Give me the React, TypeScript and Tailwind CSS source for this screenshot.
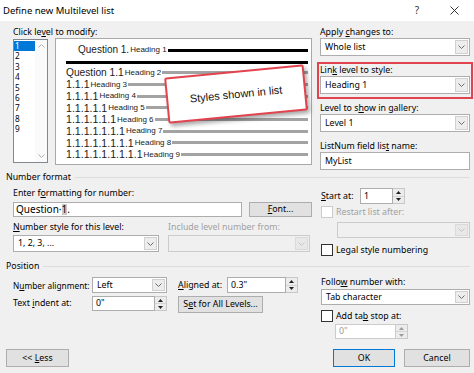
import React from "react"

const ChevronDown = ({ color = "#6d6d6d" }: { color?: string }) => (
  <svg width="7" height="4" viewBox="0 0 7 4">
    <polyline points="0.5,0.5 3.5,3.5 6.5,0.5" fill="none" stroke={color} strokeWidth="1" />
  </svg>
)

const ChevronUp = ({ color = "#b0b0b0" }: { color?: string }) => (
  <svg width="7" height="4" viewBox="0 0 7 4">
    <polyline points="0.5,3.5 3.5,0.5 6.5,3.5" fill="none" stroke={color} strokeWidth="1" />
  </svg>
)

type SelectProps = {
  value?: string
  className?: string
  disabled?: boolean
}

const Select = ({ value = "", className = "", disabled = false }: SelectProps) => (
  <div
    className={`flex items-stretch border ${
      disabled ? "border-[#cccccc] bg-[#f0f0f0]" : "border-[#adadad] bg-white"
    } ${className}`}
  >
    <span className="flex flex-1 items-center pl-[4px]">{value}</span>
    <span
      className={`my-[1px] mr-[1px] flex w-[13px] items-center justify-center border ${
        disabled ? "border-[#dadada] bg-[#e8e8e8]" : "border-[#d0d0d0] bg-[#ededed]"
      }`}
    >
      <ChevronDown color={disabled ? "#c4c4c4" : "#6d6d6d"} />
    </span>
  </div>
)

const Spin = ({ value = "", className = "", disabled = false }: SelectProps) => {
  const fill = disabled ? "#9a9a9a" : "#222"
  return (
    <div className={`flex items-stretch ${className}`}>
      <div
        className={`flex flex-1 items-center border bg-white pl-[3px] ${
          disabled ? "border-[#cccccc] text-[#9a9a9a]" : "border-[#adadad]"
        }`}
      >
        {value}
      </div>
      <div className="flex w-[12px] flex-col border border-l-0 border-[#c8c8c8] bg-[#ececec]">
        <span className="flex flex-1 items-center justify-center border-b border-[#d4d4d4]">
          <svg width="5" height="3" viewBox="0 0 5 3">
            <polygon points="0,3 2.5,0 5,3" fill={fill} />
          </svg>
        </span>
        <span className="flex flex-1 items-center justify-center">
          <svg width="5" height="3" viewBox="0 0 5 3">
            <polygon points="0,0 2.5,3 5,0" fill={fill} />
          </svg>
        </span>
      </div>
    </div>
  )
}

const Button = ({
  children,
  className = "",
  primary = false,
}: {
  children: React.ReactNode
  className?: string
  primary?: boolean
}) => (
  <button
    className={`flex items-center justify-center border bg-[#e1e1e1] ${
      primary ? "border-[#0078d7]" : "border-[#adadad]"
    } ${className}`}
  >
    <span>{children}</span>
  </button>
)

const Checkbox = ({ disabled = false }: { disabled?: boolean }) => (
  <span
    className={`block h-[12px] w-[12px] border bg-white ${
      disabled ? "border-[#cccccc]" : "border-[#333333]"
    }`}
  />
)

const GroupHeader = ({ title, className = "" }: { title: string; className?: string }) => (
  <div className={`flex h-[11px] items-center pl-[6px] pr-[4px] ${className}`}>
    <span>{title}</span>
    <span className="ml-[4px] h-px flex-1 bg-[#dcdcdc]" />
  </div>
)

const levels = [
  { num: "Question 1.1", label: "Heading 2" },
  { num: "1.1.1", label: "Heading 3" },
  { num: "1.1.1.1", label: "Heading 4" },
  { num: "1.1.1.1.1", label: "Heading 5" },
  { num: "1.1.1.1.1.1", label: "Heading 6" },
  { num: "1.1.1.1.1.1.1", label: "Heading 7" },
  { num: "1.1.1.1.1.1.1.1", label: "Heading 8" },
  { num: "1.1.1.1.1.1.1.1.1", label: "Heading 9" },
]

const LevelList = () => (
  <div className="flex h-[124px] w-[35px] border border-[#828790] bg-white">
    <div className="flex flex-1 flex-col pt-[1px] text-[8.2px]">
      {[1, 2, 3, 4, 5, 6, 7, 8, 9].map((n) => (
        <div
          key={n}
          className={`h-[10.4px] pl-[1px] leading-[10.4px] ${
            n === 1 ? "bg-[#0078d7] text-white" : ""
          }`}
        >
          {n}
        </div>
      ))}
    </div>
    <div className="flex w-[12px] flex-col items-center justify-between bg-[#fafafa] py-[4px]">
      <ChevronUp />
      <ChevronDown color="#b0b0b0" />
    </div>
  </div>
)

const Preview = () => (
  <div className="relative -mt-[1px] ml-[7px] h-[127px] w-[257px] border border-[#a9a9a9] bg-white font-['Liberation_Sans',Arial,sans-serif] text-[#1a1a1a]">
    <div className="mt-[5px] flex h-[12px] items-center pl-[22px] pr-[3px]">
      <span className="text-[10px] leading-none">Question 1.</span>
      <span className="ml-[1px] text-[8px] leading-none">Heading 1</span>
      <span className="ml-[1px] h-[3px] flex-1 bg-black" />
    </div>
    <div className="ml-[10px] mr-[3px] mt-[5px] h-[3px] bg-black" />
    <div className="mt-[3px] flex flex-col pl-[10px] pr-[3px]">
      {levels.map((l, i) => (
        <div key={l.label} className="flex h-[11.7px] items-center">
          <span className={`${i === 0 ? "text-[10.2px]" : "text-[10.6px]"} leading-none`}>
            {l.num}
          </span>
          <span className="ml-[1px] text-[8px] leading-none">{l.label}</span>
          <span className="ml-[1px] h-[3px] flex-1 bg-[#a3a3a3]" />
        </div>
      ))}
    </div>
    <div className="absolute left-[110px] top-[32px] flex h-[46px] w-[140px] rotate-[-5.5deg] items-center justify-center rounded-[2px] border-2 border-[#e2444f] bg-white text-[11px] text-[#111] shadow-[2px_3px_4px_rgba(0,0,0,0.35)]">
      Styles shown in list
    </div>
  </div>
)

export default function App() {
  return (
    <div className="h-[373px] w-[474px] overflow-hidden whitespace-nowrap bg-[#f0f0f0] font-['Noto_Sans',sans-serif] text-[8.8px] leading-[11px] text-black">
      {/* title bar */}
      <div className="flex h-[21px] items-center bg-white pl-[3px] pr-[15px]">
        <span className="flex-1 text-[9.5px]">Define new Multilevel list</span>
        <span className="mr-[31px] text-[10px] text-[#333]">?</span>
        <svg width="9" height="9" viewBox="0 0 9 9">
          <path d="M0.5 0.5 L8.5 8.5 M8.5 0.5 L0.5 8.5" stroke="#333" strokeWidth="1" />
        </svg>
      </div>

      {/* top: levels + preview + right options */}
      <div className="flex h-[151px] pl-[13px] pt-[6px]">
        <div className="flex w-[300px] flex-col">
          <div className="h-[11px]">
            Click le<u>v</u>el to modify:
          </div>
          <div className="mt-[1px] flex items-start">
            <LevelList />
            <Preview />
          </div>
        </div>
        <div className="ml-[7px] flex w-[150px] flex-col">
          <div className="h-[11px]">
            Apply <u>c</u>hanges to:
          </div>
          <Select value="Whole list" className="h-[18px]" />
          <div className="-mx-[3px] mt-[6px] border-2 border-[#e2444f] px-[1px] pb-[3px] pt-[1px]">
            <div className="h-[11px]">
              Lin<u>k</u> level to style:
            </div>
            <Select value="Heading 1" className="h-[18px]" />
          </div>
          <div className="mt-[4px] h-[11px]">
            Level to s<u>h</u>ow in gallery:
          </div>
          <Select value="Level 1" className="h-[18px]" />
          <div className="mt-[9px] h-[11px]">
            ListNum field lis<u>t</u> name:
          </div>
          <div className="flex h-[18px] items-center border border-[#adadad] bg-white pl-[4px]">
            MyList
          </div>
        </div>
      </div>

      {/* number format */}
      <GroupHeader title="Number format" />
      <div className="flex pl-[13px] pt-[5px]">
        <div className="flex w-[300px] flex-col">
          <div className="h-[11px]">
            Enter f<u>o</u>rmatting for number:
          </div>
          <div className="mt-[3px] flex">
            <div className="flex h-[15px] w-[229px] items-center border border-[#adadad] bg-white pl-[2px] text-[10px]">
              Question·<span className="bg-[#c8c8c8]">1</span>.
            </div>
            <Button className="ml-[7px] h-[15px] w-[63px]">
              <u>F</u>ont...
            </Button>
          </div>
          <div className="mt-[5px] flex h-[11px]">
            <span className="w-[155px]">
              <u>N</u>umber style for this level:
            </span>
            <span className="text-[#a0a0a0]">Include level number from:</span>
          </div>
          <div className="mt-[2px] flex">
            <Select value="1, 2, 3, ..." className="h-[17px] w-[146px]" />
            <Select disabled className="ml-[9px] h-[17px] w-[142px]" />
          </div>
        </div>
        <div className="ml-[8px] flex w-[149px] flex-col">
          <div className="flex h-[16px] items-center">
            <span className="w-[39px]">
              <u>S</u>tart at:
            </span>
            <Spin value="1" className="h-[16px] w-[45px]" />
          </div>
          <div className="mt-[2px] flex h-[12px] items-center">
            <Checkbox disabled />
            <span className="ml-[3px] text-[#a0a0a0]">Restart list after:</span>
          </div>
          <Select disabled className="ml-[16px] mt-[4px] h-[16px] w-[133px]" />
          <div className="mt-[6px] flex h-[12px] items-center">
            <Checkbox />
            <span className="ml-[3px]">Legal style numbering</span>
          </div>
        </div>
      </div>

      {/* position */}
      <GroupHeader title="Position" className="mt-[5px]" />
      <div className="flex pl-[13px] pt-[5px]">
        <div className="flex w-[300px] flex-col">
          <div className="flex h-[16px] items-center">
            <span className="w-[79px] shrink-0 text-[8.3px]">
              N<u>u</u>mber alignment:
            </span>
            <Select value="Left" className="h-[16px] w-[75px] shrink-0" />
            <span className="ml-[11px] w-[49px] shrink-0">
              <u>A</u>ligned at:
            </span>
            <Spin value={'0.3"'} className="h-[16px] w-[71px] shrink-0" />
          </div>
          <div className="mt-[3px] flex h-[17px] items-start">
            <span className="w-[79px] shrink-0 leading-[15px]">
              Text <u>i</u>ndent at:
            </span>
            <Spin value={'0"'} className="h-[15px] w-[75px] shrink-0" />
            <Button className="ml-[11px] h-[17px] w-[85px] shrink-0">
              S<u>e</u>t for All Levels...
            </Button>
          </div>
        </div>
        <div className="ml-[8px] flex w-[149px] flex-col">
          <div className="h-[11px]">
            Follo<u>w</u> number with:
          </div>
          <Select value="Tab character" className="mt-[1px] h-[16px]" />
          <div className="mt-[5px] flex h-[12px] items-center">
            <Checkbox />
            <span className="ml-[3px]">
              Add ta<u>b</u> stop at:
            </span>
          </div>
          <Spin value={'0"'} disabled className="ml-[14px] mt-[2px] h-[15px] w-[73px]" />
        </div>
      </div>

      {/* footer */}
      <div className="mt-[10px] flex pl-[6px] pr-[4px]">
        <Button className="h-[18px] w-[63px]">
          {"<< "}
          <u>L</u>ess
        </Button>
        <Button primary className="ml-auto h-[18px] w-[62px]">
          OK
        </Button>
        <Button className="ml-[9px] h-[18px] w-[66px]">Cancel</Button>
      </div>
    </div>
  )
}
